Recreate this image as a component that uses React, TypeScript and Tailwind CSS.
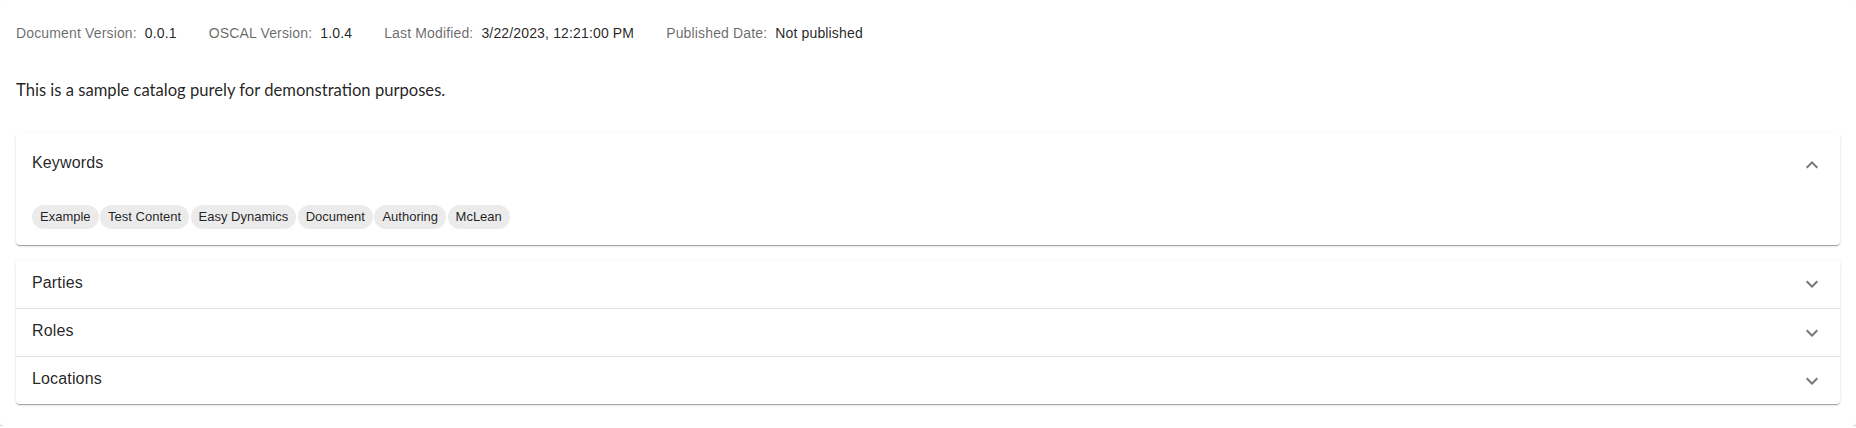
import React from "react";

const meta = [
  { label: "Document Version:", value: "0.0.1" },
  { label: "OSCAL Version:", value: "1.0.4" },
  { label: "Last Modified:", value: "3/22/2023, 12:21:00 PM" },
  { label: "Published Date:", value: "Not published" },
];

const keywords = ["Example", "Test Content", "Easy Dynamics", "Document", "Authoring", "McLean"];

const sections = ["Parties", "Roles", "Locations"];

// MUI-like elevation 1
const paper =
  "bg-white rounded shadow-[0px_2px_1px_-1px_rgba(0,0,0,0.2),0px_1px_1px_0px_rgba(0,0,0,0.14),0px_1px_3px_0px_rgba(0,0,0,0.12)]";

function ExpandIcon({ up }: { up?: boolean }) {
  return (
    <svg
      viewBox="0 0 24 24"
      className={up ? "h-6 w-6 rotate-180 fill-[rgba(0,0,0,0.54)]" : "h-6 w-6 fill-[rgba(0,0,0,0.54)]"}
    >
      <path d="M16.59 8.59 12 13.17 7.41 8.59 6 10l6 6 6-6z" />
    </svg>
  );
}

export default function App() {
  return (
    <div
      className={`${paper} min-h-[426px] px-4 pt-[23px] text-[rgba(0,0,0,0.87)]`}
      style={{ fontFamily: '"Liberation Sans", Arial, sans-serif' }}
    >
      {/* Metadata */}
      <div className="flex gap-8 text-sm leading-[21px] tracking-[0.15px]">
        {meta.map((m) => (
          <div key={m.label} className="flex">
            <span className="text-[rgba(0,0,0,0.6)]">{m.label}</span>
            <span className="ml-2">{m.value}</span>
          </div>
        ))}
      </div>

      {/* Description */}
      <p className="mt-[34px] text-[16.6px] leading-6" style={{ fontFamily: "Lato, sans-serif" }}>
        This is a sample catalog purely for demonstration purposes.
      </p>

      {/* Keywords (expanded) */}
      <div className={`${paper} mt-[31px]`}>
        <div className="flex h-16 items-center justify-between px-4 text-base leading-6 tracking-[0.15px]">
          <span className="-mt-[4px]">Keywords</span>
          <ExpandIcon up />
        </div>
        <div className="flex flex-wrap gap-[1.5px] px-4 pt-2 pb-4">
          {keywords.map((k) => (
            <span key={k} className="flex h-6 items-center rounded-2xl bg-[#ebebeb] px-2 text-[13px]">
              {k}
            </span>
          ))}
        </div>
      </div>

      {/* Collapsed sections */}
      <div className={`${paper} mt-[15px]`}>
        {sections.map((s, i) => (
          <div
            key={s}
            className={
              i === 0
                ? "flex h-12 items-center justify-between px-4 text-base leading-6 tracking-[0.15px]"
                : "flex h-12 items-center justify-between border-t border-[rgba(0,0,0,0.12)] px-4 text-base leading-6 tracking-[0.15px]"
            }
          >
            <span className="-mt-[3px]">{s}</span>
            <ExpandIcon />
          </div>
        ))}
      </div>
    </div>
  );
}
